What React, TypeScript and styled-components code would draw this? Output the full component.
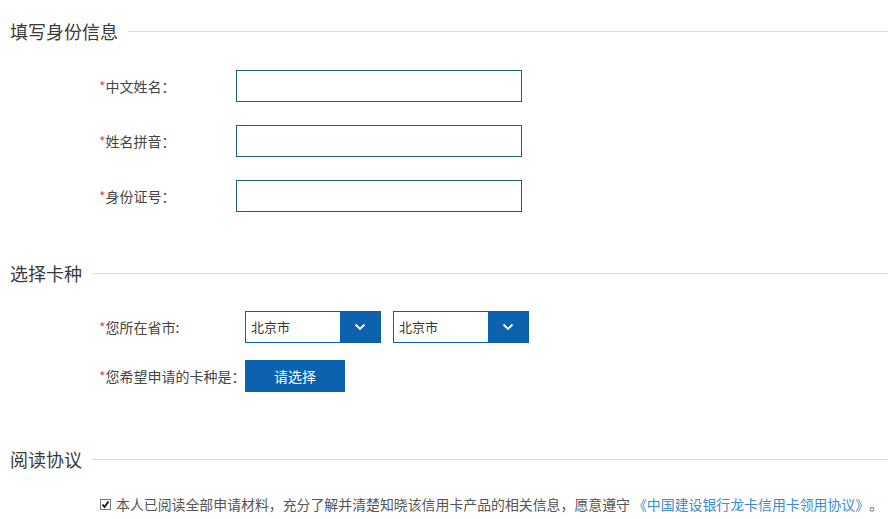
import React from 'react';
import styled, {createGlobalStyle} from 'styled-components';

const GlobalStyle = createGlobalStyle`
  html, body {
    margin: 0;
    padding: 0;
    background: #fff;
  }
  body {
    font-family: "Microsoft YaHei", "Noto Sans CJK SC", "Liberation Sans", sans-serif;
    color: #333;
  }
`;

const Page = styled.div`
  width: 888px;
  padding-top: 19px;
  overflow: hidden;
`;

const SectionHead = styled.div<{ mt?: number }>`
  display: flex;
  align-items: center;
  height: 24px;
  margin-top: ${props => props.mt || 0}px;
  padding-left: 10px;
`;

const SectionTitle = styled.h3`
  margin: 0 10px 0 0;
  font-size: 18px;
  font-weight: normal;
  line-height: 24px;
  color: #3a3a3a;
`;

const Rule = styled.div`
  flex: 1;
  height: 1px;
  background: #dcdcdc;
`;

const Rows = styled.div<{ mt: number; gap: number }>`
  display: flex;
  flex-direction: column;
  gap: ${props => props.gap}px;
  margin-top: ${props => props.mt}px;
  padding-left: 99px;
`;

const Row = styled.div`
  display: flex;
  align-items: center;
`;

const Label = styled.label<{ w: number }>`
  width: ${props => props.w}px;
  flex-shrink: 0;
  font-size: 14px;
  color: #444;
  white-space: nowrap;
`;

const Star = styled.span`
  color: #d9534f;
`;

const TextInput = styled.input`
  box-sizing: border-box;
  width: 286px;
  height: 32px;
  border: 1px solid #1d5f73;
  margin: 0;
  padding: 0 8px;
  outline: none;
`;

const Select = styled.div`
  box-sizing: border-box;
  display: flex;
  width: 136px;
  height: 32px;
  border: 1px solid #0c5fa9;
  & + & {
    margin-left: 12px;
  }
`;

const SelectValue = styled.span`
  flex: 1;
  padding-left: 5px;
  line-height: 30px;
  font-size: 13px;
  color: #333;
`;

const SelectArrow = styled.span`
  width: 40px;
  display: flex;
  align-items: center;
  justify-content: center;
  background: #0c62ad;
`;

const BlueButton = styled.button`
  width: 100px;
  height: 32px;
  border: none;
  background: #0c62ad;
  color: #fff;
  font-family: inherit;
  font-size: 14px;
  padding: 0;
`;

const Agree = styled.div`
  display: flex;
  align-items: center;
  margin-top: 23px;
  padding-left: 100px;
  font-size: 13.9px;
  color: #555;
  white-space: nowrap;
`;

const CheckBox = styled.span`
  box-sizing: border-box;
  width: 11px;
  height: 11px;
  border: 1px solid #777;
  display: flex;
  align-items: center;
  justify-content: center;
  margin-right: 5px;
`;

const Link = styled.a`
  color: #3a8ccb;
  text-decoration: none;
  margin-left: 3px;
`;

const Chevron = () => (
  <svg width="12" height="8" viewBox="0 0 12 8">
    <polyline points="1.5,1.5 6,6 10.5,1.5" fill="none" stroke="#fff" strokeWidth="1.8" />
  </svg>
);

const Tick = () => (
  <svg width="9" height="9" viewBox="0 0 9 9">
    <polyline points="1.5,4.5 3.5,7 7.5,1.5" fill="none" stroke="#111" strokeWidth="1.8" />
  </svg>
);

const idFields = ['中文姓名：', '姓名拼音：', '身份证号：'];

export default function App() {
  return (
    <Page>
      <GlobalStyle />
      <SectionHead>
        <SectionTitle>填写身份信息</SectionTitle>
        <Rule />
      </SectionHead>
      <Rows mt={27} gap={23}>
        {idFields.map(f => (
          <Row key={f}>
            <Label w={137}><Star>*</Star>{f}</Label>
            <TextInput />
          </Row>
        ))}
      </Rows>

      <SectionHead mt={49}>
        <SectionTitle>选择卡种</SectionTitle>
        <Rule />
      </SectionHead>
      <Rows mt={26} gap={17}>
        <Row>
          <Label w={146}><Star>*</Star>您所在省市:</Label>
          <Select>
            <SelectValue>北京市</SelectValue>
            <SelectArrow><Chevron /></SelectArrow>
          </Select>
          <Select>
            <SelectValue>北京市</SelectValue>
            <SelectArrow><Chevron /></SelectArrow>
          </Select>
        </Row>
        <Row>
          <Label w={146}><Star>*</Star>您希望申请的卡种是：</Label>
          <BlueButton>请选择</BlueButton>
        </Row>
      </Rows>

      <SectionHead mt={55}>
        <SectionTitle>阅读协议</SectionTitle>
        <Rule />
      </SectionHead>
      <Agree>
        <CheckBox><Tick /></CheckBox>
        本人已阅读全部申请材料，充分了解并清楚知晓该信用卡产品的相关信息，愿意遵守
        <Link>《中国建设银行龙卡信用卡领用协议》</Link>。
      </Agree>
    </Page>
  );
}
